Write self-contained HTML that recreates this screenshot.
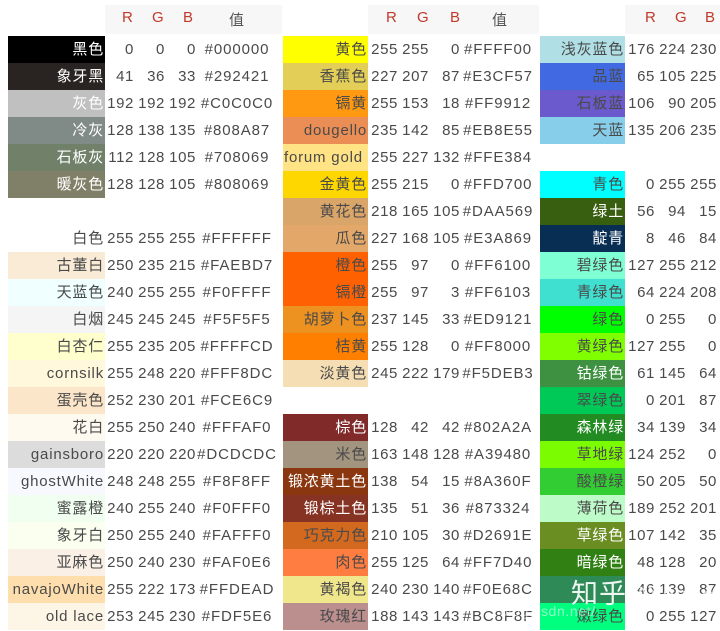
<!DOCTYPE html>
<html><head><meta charset="utf-8"><style>
*{margin:0;padding:0;box-sizing:border-box}
body{width:720px;height:631px;background:#fff;position:relative;overflow:hidden;font-family:"Liberation Sans","Noto Sans CJK SC",sans-serif;font-size:15px;color:#4a4a4a;letter-spacing:.6px}
.hb{position:absolute;top:5px;height:29px;background:#f7f7f7}
.h{position:absolute;top:9px;font-size:15px;color:#c0392b}
.g{position:absolute;top:36px}
.r{height:27px;display:flex;align-items:center;white-space:nowrap}
.s{height:27px;line-height:27px;text-align:right;padding-right:1px;overflow:hidden;font-size:15px;letter-spacing:.8px}
.gl .s{width:97px}.gm .s,.gr .s{width:85px}
.n{text-align:right;width:31px}
.n1{width:29px}
.gm .n1,.gr .n1{width:30px}
.x{text-align:center;width:82px;letter-spacing:.9px}
.gm .x{width:76px}
.w{color:#fff}
</style></head><body>
<div class="hb" style="left:105px;width:177px"></div>
<div class="hb" style="left:368px;width:171px"></div>
<div class="hb" style="left:625px;width:95px"></div>
<div class="h" style="left:122px">R</div><div class="h" style="left:152px">G</div><div class="h" style="left:183px">B</div><div class="h" style="left:229px;color:#555">值</div>
<div class="h" style="left:386px">R</div><div class="h" style="left:417px">G</div><div class="h" style="left:450px">B</div><div class="h" style="left:492px;color:#555">值</div>
<div class="h" style="left:645px">R</div><div class="h" style="left:675px">G</div><div class="h" style="left:705px">B</div>

<div class="g gl" style="left:8px">
<div class="r"><div class="s w" style="background:#000">黑色</div><div class="n n1">0</div><div class="n">0</div><div class="n">0</div><div class="x">#000000</div></div>
<div class="r"><div class="s w" style="background:#292421">象牙黑</div><div class="n n1">41</div><div class="n">36</div><div class="n">33</div><div class="x">#292421</div></div>
<div class="r"><div class="s w" style="background:#C0C0C0">灰色</div><div class="n n1">192</div><div class="n">192</div><div class="n">192</div><div class="x">#C0C0C0</div></div>
<div class="r"><div class="s w" style="background:#808A87">冷灰</div><div class="n n1">128</div><div class="n">138</div><div class="n">135</div><div class="x">#808A87</div></div>
<div class="r"><div class="s w" style="background:#708069">石板灰</div><div class="n n1">112</div><div class="n">128</div><div class="n">105</div><div class="x">#708069</div></div>
<div class="r"><div class="s w" style="background:#808069">暖灰色</div><div class="n n1">128</div><div class="n">128</div><div class="n">105</div><div class="x">#808069</div></div>
<div class="r"></div>
<div class="r"><div class="s" style="background:#FFFFFF">白色</div><div class="n n1">255</div><div class="n">255</div><div class="n">255</div><div class="x">#FFFFFF</div></div>
<div class="r"><div class="s" style="background:#FAEBD7">古董白</div><div class="n n1">250</div><div class="n">235</div><div class="n">215</div><div class="x">#FAEBD7</div></div>
<div class="r"><div class="s" style="background:#F0FFFF">天蓝色</div><div class="n n1">240</div><div class="n">255</div><div class="n">255</div><div class="x">#F0FFFF</div></div>
<div class="r"><div class="s" style="background:#F5F5F5">白烟</div><div class="n n1">245</div><div class="n">245</div><div class="n">245</div><div class="x">#F5F5F5</div></div>
<div class="r"><div class="s" style="background:#FFFFCD">白杏仁</div><div class="n n1">255</div><div class="n">235</div><div class="n">205</div><div class="x">#FFFFCD</div></div>
<div class="r"><div class="s" style="background:#FFF8DC">cornsilk</div><div class="n n1">255</div><div class="n">248</div><div class="n">220</div><div class="x">#FFF8DC</div></div>
<div class="r"><div class="s" style="background:#FCE6C9">蛋壳色</div><div class="n n1">252</div><div class="n">230</div><div class="n">201</div><div class="x">#FCE6C9</div></div>
<div class="r"><div class="s" style="background:#FFFAF0">花白</div><div class="n n1">255</div><div class="n">250</div><div class="n">240</div><div class="x">#FFFAF0</div></div>
<div class="r"><div class="s" style="background:#DCDCDC">gainsboro</div><div class="n n1">220</div><div class="n">220</div><div class="n">220</div><div class="x">#DCDCDC</div></div>
<div class="r"><div class="s" style="background:#F8F8FF">ghostWhite</div><div class="n n1">248</div><div class="n">248</div><div class="n">255</div><div class="x">#F8F8FF</div></div>
<div class="r"><div class="s" style="background:#F0FFF0">蜜露橙</div><div class="n n1">240</div><div class="n">255</div><div class="n">240</div><div class="x">#F0FFF0</div></div>
<div class="r"><div class="s" style="background:#FAFFF0">象牙白</div><div class="n n1">250</div><div class="n">255</div><div class="n">240</div><div class="x">#FAFFF0</div></div>
<div class="r"><div class="s" style="background:#FAF0E6">亚麻色</div><div class="n n1">250</div><div class="n">240</div><div class="n">230</div><div class="x">#FAF0E6</div></div>
<div class="r"><div class="s" style="background:#FFDEAD">navajoWhite</div><div class="n n1">255</div><div class="n">222</div><div class="n">173</div><div class="x">#FFDEAD</div></div>
<div class="r"><div class="s" style="background:#FDF5E6">old lace</div><div class="n n1">253</div><div class="n">245</div><div class="n">230</div><div class="x">#FDF5E6</div></div>
</div>

<div class="g gm" style="left:283px">
<div class="r"><div class="s" style="background:#FFFF00">黄色</div><div class="n n1">255</div><div class="n">255</div><div class="n">0</div><div class="x">#FFFF00</div></div>
<div class="r"><div class="s" style="background:#E3CF57">香蕉色</div><div class="n n1">227</div><div class="n">207</div><div class="n">87</div><div class="x">#E3CF57</div></div>
<div class="r"><div class="s" style="background:#FF9912">镉黄</div><div class="n n1">255</div><div class="n">153</div><div class="n">18</div><div class="x">#FF9912</div></div>
<div class="r"><div class="s" style="background:#EB8E55">dougello</div><div class="n n1">235</div><div class="n">142</div><div class="n">85</div><div class="x">#EB8E55</div></div>
<div class="r"><div class="s" style="background:#FFE384;text-align:left;padding-left:1px">forum gold</div><div class="n n1">255</div><div class="n">227</div><div class="n">132</div><div class="x">#FFE384</div></div>
<div class="r"><div class="s" style="background:#FFD700">金黄色</div><div class="n n1">255</div><div class="n">215</div><div class="n">0</div><div class="x">#FFD700</div></div>
<div class="r"><div class="s" style="background:#DAA569">黄花色</div><div class="n n1">218</div><div class="n">165</div><div class="n">105</div><div class="x">#DAA569</div></div>
<div class="r"><div class="s" style="background:#E3A869">瓜色</div><div class="n n1">227</div><div class="n">168</div><div class="n">105</div><div class="x">#E3A869</div></div>
<div class="r"><div class="s" style="background:#FF6100">橙色</div><div class="n n1">255</div><div class="n">97</div><div class="n">0</div><div class="x">#FF6100</div></div>
<div class="r"><div class="s" style="background:#FF6103">镉橙</div><div class="n n1">255</div><div class="n">97</div><div class="n">3</div><div class="x">#FF6103</div></div>
<div class="r"><div class="s" style="background:#ED9121">胡萝卜色</div><div class="n n1">237</div><div class="n">145</div><div class="n">33</div><div class="x">#ED9121</div></div>
<div class="r"><div class="s" style="background:#FF8000">桔黄</div><div class="n n1">255</div><div class="n">128</div><div class="n">0</div><div class="x">#FF8000</div></div>
<div class="r"><div class="s" style="background:#F5DEB3">淡黄色</div><div class="n n1">245</div><div class="n">222</div><div class="n">179</div><div class="x">#F5DEB3</div></div>
<div class="r"></div>
<div class="r"><div class="s w" style="background:#802A2A">棕色</div><div class="n n1">128</div><div class="n">42</div><div class="n">42</div><div class="x">#802A2A</div></div>
<div class="r"><div class="s" style="background:#A39480">米色</div><div class="n n1">163</div><div class="n">148</div><div class="n">128</div><div class="x">#A39480</div></div>
<div class="r"><div class="s w" style="background:#8A360F">锻浓黄土色</div><div class="n n1">138</div><div class="n">54</div><div class="n">15</div><div class="x">#8A360F</div></div>
<div class="r"><div class="s w" style="background:#873324">锻棕土色</div><div class="n n1">135</div><div class="n">51</div><div class="n">36</div><div class="x">#873324</div></div>
<div class="r"><div class="s" style="background:#D2691E">巧克力色</div><div class="n n1">210</div><div class="n">105</div><div class="n">30</div><div class="x">#D2691E</div></div>
<div class="r"><div class="s" style="background:#FF7D40">肉色</div><div class="n n1">255</div><div class="n">125</div><div class="n">64</div><div class="x">#FF7D40</div></div>
<div class="r"><div class="s" style="background:#F0E68C">黄褐色</div><div class="n n1">240</div><div class="n">230</div><div class="n">140</div><div class="x">#F0E68C</div></div>
<div class="r"><div class="s" style="background:#BC8F8F">玫瑰红</div><div class="n n1">188</div><div class="n">143</div><div class="n">143</div><div class="x">#BC8F8F</div></div>
</div>

<div class="g gr" style="left:540px">
<div class="r"><div class="s" style="background:#B0E0E6">浅灰蓝色</div><div class="n n1">176</div><div class="n">224</div><div class="n">230</div></div>
<div class="r"><div class="s" style="background:#4169E1">品蓝</div><div class="n n1">65</div><div class="n">105</div><div class="n">225</div></div>
<div class="r"><div class="s" style="background:#6A5ACD">石板蓝</div><div class="n n1">106</div><div class="n">90</div><div class="n">205</div></div>
<div class="r"><div class="s" style="background:#87CEEB">天蓝</div><div class="n n1">135</div><div class="n">206</div><div class="n">235</div></div>
<div class="r"></div>
<div class="r"><div class="s" style="background:#00FFFF">青色</div><div class="n n1">0</div><div class="n">255</div><div class="n">255</div></div>
<div class="r"><div class="s w" style="background:#385E0F">绿土</div><div class="n n1">56</div><div class="n">94</div><div class="n">15</div></div>
<div class="r"><div class="s w" style="background:#082E54">靛青</div><div class="n n1">8</div><div class="n">46</div><div class="n">84</div></div>
<div class="r"><div class="s" style="background:#7FFFD4">碧绿色</div><div class="n n1">127</div><div class="n">255</div><div class="n">212</div></div>
<div class="r"><div class="s" style="background:#40E0D0">青绿色</div><div class="n n1">64</div><div class="n">224</div><div class="n">208</div></div>
<div class="r"><div class="s" style="background:#00FF00">绿色</div><div class="n n1">0</div><div class="n">255</div><div class="n">0</div></div>
<div class="r"><div class="s" style="background:#7FFF00">黄绿色</div><div class="n n1">127</div><div class="n">255</div><div class="n">0</div></div>
<div class="r"><div class="s w" style="background:#3D9140">钴绿色</div><div class="n n1">61</div><div class="n">145</div><div class="n">64</div></div>
<div class="r"><div class="s" style="background:#00C957">翠绿色</div><div class="n n1">0</div><div class="n">201</div><div class="n">87</div></div>
<div class="r"><div class="s w" style="background:#228B22">森林绿</div><div class="n n1">34</div><div class="n">139</div><div class="n">34</div></div>
<div class="r"><div class="s" style="background:#7CFC00">草地绿</div><div class="n n1">124</div><div class="n">252</div><div class="n">0</div></div>
<div class="r"><div class="s" style="background:#32CD32">酸橙绿</div><div class="n n1">50</div><div class="n">205</div><div class="n">50</div></div>
<div class="r"><div class="s" style="background:#BDFCC9">薄荷色</div><div class="n n1">189</div><div class="n">252</div><div class="n">201</div></div>
<div class="r"><div class="s w" style="background:#6B8E23">草绿色</div><div class="n n1">107</div><div class="n">142</div><div class="n">35</div></div>
<div class="r"><div class="s w" style="background:#308014">暗绿色</div><div class="n n1">48</div><div class="n">128</div><div class="n">20</div></div>
<div class="r"><div class="s w" style="background:#2E8B57"></div><div class="n n1">46</div><div class="n">139</div><div class="n">87</div></div>
<div class="r"><div class="s" style="background:#00FF7F">嫩绿色</div><div class="n n1">0</div><div class="n">255</div><div class="n">127</div></div>
</div>

<div style="position:absolute;left:500px;top:603px;font-size:14px;color:rgba(255,255,255,.55)">blog.csdn.net/</div>
<div style="position:absolute;left:571px;top:576px;font-size:27px;line-height:36px;color:rgba(255,255,255,.92);letter-spacing:1px">知乎</div>
<div style="position:absolute;left:624px;top:580px;font-size:23px;line-height:30px;color:rgba(255,255,255,.75)">@Yasen</div>
</body></html>
